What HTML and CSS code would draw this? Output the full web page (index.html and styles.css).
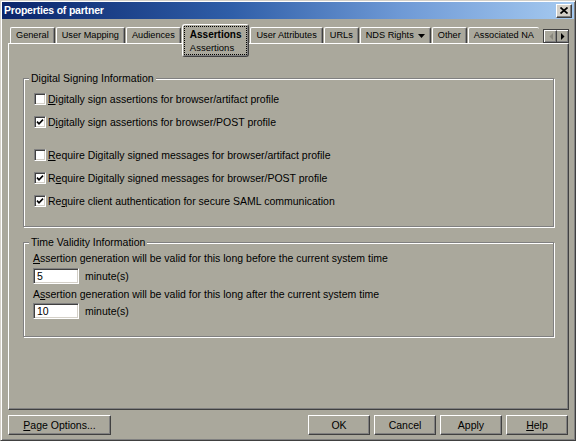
FILE: index.html
```html
<!DOCTYPE html>
<html>
<head>
<meta charset="utf-8">
<title>Properties of partner</title>
<link rel="stylesheet" href="styles.css">
</head>
<body>
<div class="window">
  <div class="titlebar">
    <span class="title">Properties of partner</span>
    <span class="close"><svg width="8" height="7" viewBox="0 0 8 7"><path d="M0.5 0.5 L7.5 6.5 M7.5 0.5 L0.5 6.5" stroke="#000" stroke-width="1.7" fill="none"/></svg></span>
  </div>
  <div class="tabrow">
    <div class="tabview">
      <div class="tab">General</div>
      <div class="tab">User Mapping</div>
      <div class="tab">Audiences</div>
      <div class="tab selected">
        <div class="focus">
          <div class="tab-main">Assertions</div>
          <div class="tab-sub">Assertions</div>
        </div>
      </div>
      <div class="tab">User Attributes</div>
      <div class="tab">URLs</div>
      <div class="tab">NDS Rights <svg class="drop" width="7" height="4" viewBox="0 0 7 4"><path d="M0 0 H7 L3.5 4 Z" fill="#000"/></svg></div>
      <div class="tab">Other</div>
      <div class="tab cut">Associated NA</div>
    </div>
    <div class="tabscroll">
      <span class="sbtn off"><svg width="4" height="7" viewBox="0 0 4 7"><path d="M4 0 V7 L0.5 3.5 Z" fill="#8a887e"/></svg></span>
      <span class="sbtn"><svg width="4" height="7" viewBox="0 0 4 7"><path d="M0 0 V7 L3.5 3.5 Z" fill="#000"/></svg></span>
    </div>
  </div>
  <div class="panel">
    <div class="group g1">
      <div class="gtitle">Digital Signing Information</div>
      <div class="rows">
        <div class="row"><span class="cb"></span><span><u>D</u>igitally sign assertions for browser/artifact profile</span></div>
        <div class="row"><span class="cb"><svg width="8" height="8" viewBox="0 0 8 8"><path d="M1 3.6 L3 5.8 L7 1.6" stroke="#000" stroke-width="1.6" fill="none"/></svg></span><span>D<u>i</u>gitally sign assertions for browser/POST profile</span></div>
        <div class="row gap"><span class="cb"></span><span><u>R</u>equire Digitally signed messages for browser/artifact profile</span></div>
        <div class="row"><span class="cb"><svg width="8" height="8" viewBox="0 0 8 8"><path d="M1 3.6 L3 5.8 L7 1.6" stroke="#000" stroke-width="1.6" fill="none"/></svg></span><span>R<u>e</u>quire Digitally signed messages for browser/POST profile</span></div>
        <div class="row"><span class="cb"><svg width="8" height="8" viewBox="0 0 8 8"><path d="M1 3.6 L3 5.8 L7 1.6" stroke="#000" stroke-width="1.6" fill="none"/></svg></span><span>Re<u>q</u>uire client authentication for secure SAML communication</span></div>
      </div>
    </div>
    <div class="group g2">
      <div class="gtitle">Time Validity Information</div>
      <div class="tv">
        <div class="lbl"><u>A</u>ssertion generation will be valid for this long before the current system time</div>
        <div class="fieldrow first"><span class="field">5</span><span>minute(s)</span></div>
        <div class="lbl second">A<u>s</u>sertion generation will be valid for this long after the current system time</div>
        <div class="fieldrow last"><span class="field">10</span><span>minute(s)</span></div>
      </div>
    </div>
  </div>
  <div class="footer">
    <span class="btn wide"><u>P</u>age Options...</span>
    <div class="btns">
      <span class="btn">OK</span>
      <span class="btn">Cancel</span>
      <span class="btn">Apply</span>
      <span class="btn"><u>H</u>elp</span>
    </div>
  </div>
</div>
</body>
</html>
```

FILE: styles.css
```css
html, body {
  margin: 0;
  padding: 0;
  background: #aaa89c;
}
body {
  font-family: "Liberation Sans", Arial, sans-serif;
  color: #000;
}
.window {
  width: 576px;
  height: 441px;
  box-sizing: border-box;
  border: 1px solid;
  border-color: #d4d0c8 #404040 #404040 #d4d0c8;
  box-shadow: inset 1px 1px 0 #fff, inset -1px -1px 0 #808080;
  padding: 1px;
  background: #aaa89c;
}
.titlebar {
  height: 17px;
  display: flex;
  align-items: center;
  justify-content: space-between;
  background: linear-gradient(90deg, #0a246a 0%, #2f5ea8 40%, #6f9ad6 70%, #a6caf0 100%);
  padding: 0 2px 0 2px;
}
.title {
  color: #fff;
  font-weight: bold;
  font-size: 10.5px;
  letter-spacing: -0.2px;
  line-height: 17px;
}
.close {
  width: 16px;
  height: 14px;
  box-sizing: border-box;
  display: flex;
  align-items: center;
  justify-content: center;
  background: #d4d0c8;
  border: 1px solid;
  border-color: #fff #404040 #404040 #fff;
  box-shadow: inset -1px -1px 0 #808080;
}
.tabrow {
  display: flex;
  align-items: flex-start;
  height: 16px;
  margin: 8px 0 0 8px;
}
.tabview {
  flex: none;
  width: 525px;
  height: 16px;
  display: flex;
  align-items: flex-start;
}
.tab {
  flex: none;
  height: 16px;
  box-sizing: border-box;
  padding: 0 5px;
  margin-right: 1px;
  border-top: 1px solid #fff;
  border-left: 1px solid #fff;
  border-right: 1px solid #404040;
  box-shadow: inset -1px 0 0 #808080;
  border-radius: 2px 2px 0 0;
  font-size: 9.2px;
  line-height: 15px;
  white-space: nowrap;
  display: flex;
  align-items: center;
  gap: 4px;
}
.tab.cut {
  border-right: none;
  box-shadow: none;
}
.tab .drop {
  margin-top: 1px;
}
.tab.selected {
  position: relative;
  z-index: 2;
  height: 33px;
  margin-top: -3px;
  padding: 1px;
  display: block;
  border: 1px solid;
  border-color: #fff #404040 #404040 #fff;
  border-radius: 3px;
  background: #aaa89c;
  box-shadow: inset -1px -1px 0 #808080;
}
.focus {
  border: 1px dotted #000;
  padding: 1px 5px 0 5px;
}
.tab-main {
  font-weight: bold;
  font-size: 10px;
  line-height: 13px;
  height: 13px;
}
.tab-sub {
  font-size: 9.5px;
  line-height: 13px;
  height: 13px;
}
.tabscroll {
  flex: none;
  margin: 2px 0 0 8px;
  display: flex;
  border: 1px solid #404040;
  height: 14px;
  box-sizing: border-box;
}
.sbtn {
  width: 12px;
  height: 12px;
  box-sizing: border-box;
  display: flex;
  align-items: center;
  justify-content: center;
  background: #aaa89c;
  border-top: 1px solid #fff;
  border-left: 1px solid #fff;
  box-shadow: inset -1px -1px 0 #808080;
}
.sbtn + .sbtn {
  border-left: 1px solid #404040;
}
.panel {
  height: 367px;
  box-sizing: border-box;
  margin: 0 5px 0 6px;
  border: 1px solid;
  border-color: #fff #404040 #404040 #fff;
  box-shadow: inset -1px -1px 0 #808080;
  padding: 34px 14px 0 14px;
}
.group {
  border: 1px solid #808080;
  box-shadow: inset 1px 1px 0 #fff, 1px 1px 0 #fff;
  font-size: 10.5px;
}
.gtitle {
  margin: -7px 0 0 5px;
  width: fit-content;
  padding: 0 2px;
  line-height: 13px;
  height: 13px;
  background: #aaa89c;
}
.rows {
  padding: 2px 0 14px 10px;
}
.row {
  height: 23px;
  display: flex;
  align-items: center;
  gap: 2px;
  white-space: nowrap;
}
.row.gap {
  margin-top: 10px;
}
.cb {
  flex: none;
  width: 12px;
  height: 12px;
  box-sizing: border-box;
  background: #fff;
  border: 1px solid;
  border-color: #808080 #fff #fff #808080;
  box-shadow: inset 1px 1px 0 #404040, inset -1px -1px 0 #d4d0c8;
  display: flex;
  align-items: center;
  justify-content: center;
}
.g2 {
  margin-top: 15px;
}
.tv {
  padding: 3px 0 17px 9px;
}
.lbl {
  line-height: 13px;
  white-space: nowrap;
}
.lbl.second {
  margin-top: 4px;
}
.fieldrow {
  display: flex;
  align-items: center;
  gap: 6px;
  height: 16px;
  margin-top: 3px;
}
.fieldrow.last {
  margin-top: 2px;
}
.field {
  width: 46px;
  height: 16px;
  box-sizing: border-box;
  background: #fff;
  border: 1px solid;
  border-color: #808080 #fff #fff #808080;
  box-shadow: inset 1px 1px 0 #404040, inset -1px -1px 0 #d4d0c8;
  padding-left: 3px;
  line-height: 14px;
}
.footer {
  display: flex;
  margin-top: 5px;
  padding: 0 6px 0 6px;
}
.btns {
  margin-left: auto;
  display: flex;
  gap: 4px;
}
.btn {
  width: 62px;
  height: 20px;
  box-sizing: border-box;
  border: 1px solid;
  border-color: #fff #404040 #404040 #fff;
  box-shadow: inset -1px -1px 0 #808080;
  font-size: 10.5px;
  line-height: 18px;
  text-align: center;
  white-space: nowrap;
}
.btn.wide {
  width: 103px;
}
```
